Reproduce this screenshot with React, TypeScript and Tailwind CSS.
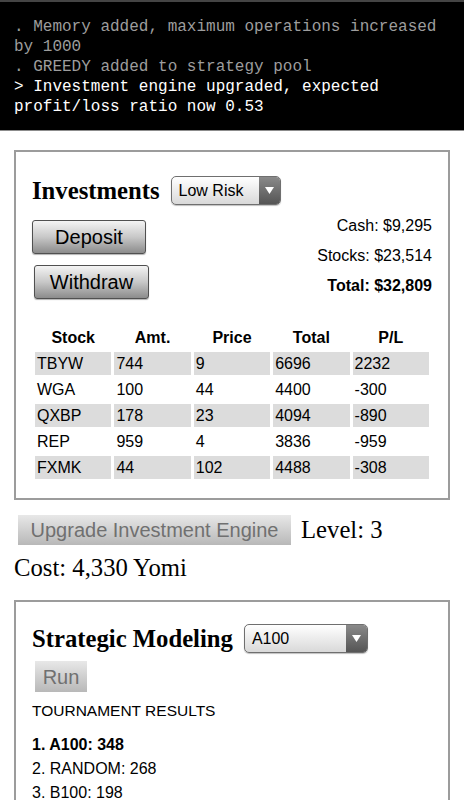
import React from "react";

const log = [
  { text: ". Memory added, maximum operations increased by 1000", latest: false },
  { text: ". GREEDY added to strategy pool", latest: false },
  { text: "> Investment engine upgraded, expected profit/loss ratio now 0.53", latest: true },
];

const stocks = [
  ["TBYW", "744", "9", "6696", "2232"],
  ["WGA", "100", "44", "4400", "-300"],
  ["QXBP", "178", "23", "4094", "-890"],
  ["REP", "959", "4", "3836", "-959"],
  ["FXMK", "44", "102", "4488", "-308"],
];

const results = ["1. A100: 348", "2. RANDOM: 268", "3. B100: 198"];

const sans = "font-['Liberation_Sans',Arial,sans-serif]";
const serif = "font-['Liberation_Serif','Times_New_Roman',serif]";

const Select = ({ label, width }: { label: string; width: string }) => (
  <div
    className={`${width} h-[29px] flex rounded-[5px] border border-[#6f6f6f] overflow-hidden bg-gradient-to-b from-white to-[#d9d9d9] shadow-[0_1px_1px_rgba(0,0,0,0.25)]`}
  >
    <span className={`${sans} flex-1 pl-[7px] text-[16px] leading-[28px] text-black`}>{label}</span>
    <span className="w-[21px] flex items-center justify-center bg-gradient-to-b from-[#8a8a8a] to-[#555]">
      <svg width="9" height="7" viewBox="0 0 9 7">
        <path d="M0 0 L9 0 L4.5 7 Z" fill="#fff" />
      </svg>
    </span>
  </div>
);

const GrayButton = ({ label, className }: { label: string; className: string }) => (
  <button
    className={`${sans} ${className} rounded-[3px] border border-[#505050] bg-gradient-to-b from-[#f4f4f4] via-[#c8c8c8] to-[#8c8c8c] text-[20px] text-black leading-none shadow-[0_1px_1px_rgba(0,0,0,0.3)]`}
  >
    {label}
  </button>
);

const DisabledButton = ({ label, className }: { label: string; className: string }) => (
  <button
    className={`${sans} ${className} bg-gradient-to-b from-[#e8e8e8] to-[#b8b8b8] text-[20px] text-[#707070] leading-none`}
  >
    {label}
  </button>
);

export default function App() {
  return (
    <div className="w-[464px] min-h-[800px] bg-white text-black">
      <div className="bg-black border-t-2 border-b border-t-[#444] border-b-[#8c8c8c] px-[14px] pt-[15px] pb-[13px]">
        {log.map((l, i) => (
          <p
            key={i}
            className={`font-['Liberation_Mono','Courier_New',monospace] text-[16px] leading-[20px] ${
              l.latest ? "text-white" : "text-[#9d9d9d]"
            }`}
          >
            {l.text}
          </p>
        ))}
      </div>

      <div className="px-[14px] pt-[19px]">
        <section className="border-2 border-[#9c9c9c] px-4 pt-[24px] pb-[16px]">
          <div className="flex items-center gap-[11px]">
            <h2 className={`${serif} text-[24.7px] font-bold leading-[29px]`}>Investments</h2>
            <Select label="Low Risk" width="w-[110px]" />
          </div>

          <div className="flex justify-between mt-[10px]">
            <div className="flex flex-col pt-[5px]">
              <GrayButton label="Deposit" className="w-[114px] h-[34px]" />
              <GrayButton label="Withdraw" className="w-[115px] h-[34px] ml-[2px] mt-[11px]" />
            </div>
            <div className={`${sans} text-[16px] text-right flex flex-col gap-[10px] leading-[20px] pt-[1px]`}>
              <span>Cash: $9,295</span>
              <span>Stocks: $23,514</span>
              <span className="font-bold">Total: $32,809</span>
            </div>
          </div>

          <table className={`${sans} w-full table-fixed border-separate border-spacing-[3px] mt-[24px] text-[16px]`}>
            <thead>
              <tr>
                {["Stock", "Amt.", "Price", "Total", "P/L"].map((h) => (
                  <th key={h} className="h-[23px] font-bold text-center leading-[23px]">
                    {h}
                  </th>
                ))}
              </tr>
            </thead>
            <tbody>
              {stocks.map((row, i) => (
                <tr key={row[0]} className={i % 2 === 0 ? "bg-[#dcdcdc]" : "bg-white"}>
                  {row.map((c, j) => (
                    <td key={j} className="h-[23px] pl-[2px] leading-[23px]">
                      {c}
                    </td>
                  ))}
                </tr>
              ))}
            </tbody>
          </table>
        </section>

        <div className="flex items-center gap-[10px] mt-[15px] ml-[4px]">
          <DisabledButton label="Upgrade Investment Engine" className="w-[273px] h-[30px]" />
          <span className={`${serif} text-[24.7px] leading-[30px]`}>Level: 3</span>
        </div>
        <p className={`${serif} text-[24.7px] leading-[28px] mt-[9px]`}>Cost: 4,330 Yomi</p>

        <section className="border-2 border-[#9c9c9c] px-4 pt-[22px] pb-[15px] mt-[18px]">
          <div className="flex items-center gap-[11px]">
            <h2 className={`${serif} text-[24.7px] font-bold leading-[29px]`}>Strategic Modeling</h2>
            <Select label="A100" width="w-[124px]" />
          </div>
          <DisabledButton label="Run" className="w-[52px] h-[31px] ml-[3px] mt-[8px]" />
          <p className={`${sans} text-[15.5px] leading-[20px] mt-[9px]`}>TOURNAMENT RESULTS</p>
          <div className={`${sans} text-[16px] leading-[24px] mt-[12px]`}>
            {results.map((r, i) => (
              <p key={r} className={i === 0 ? "font-bold" : ""}>
                {r}
              </p>
            ))}
          </div>
        </section>
      </div>
    </div>
  );
}
